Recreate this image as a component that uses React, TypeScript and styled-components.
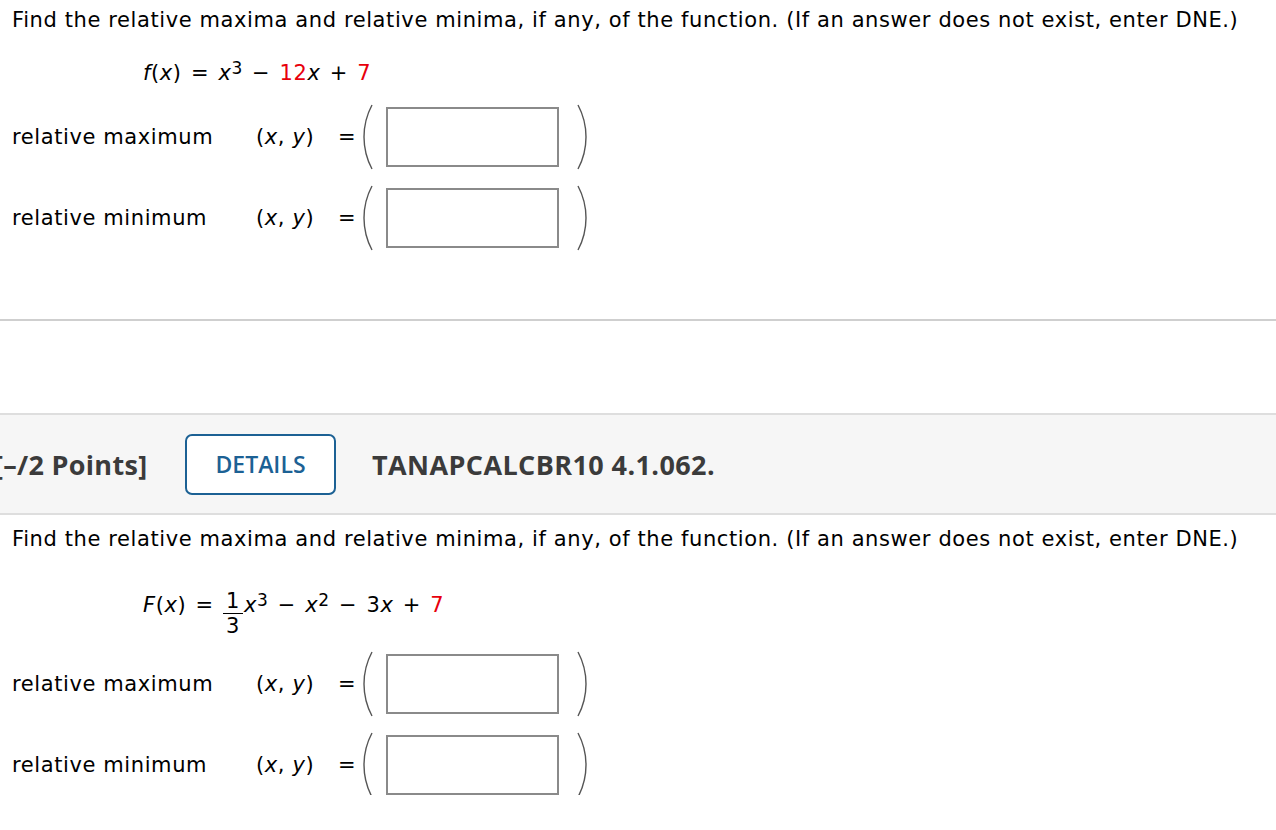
import React from "react";
import styled, { createGlobalStyle } from "styled-components";

const Global = createGlobalStyle`
  html, body { margin: 0; padding: 0; background: #fff; }
  body { font-family: "DejaVu Sans", Verdana, sans-serif; color: #000; }
`;

const Page = styled.div`
  width: 1276px;
  overflow: hidden;
`;

const Question = styled.section<{ $top: number }>`
  padding: ${(p) => p.$top}px 0 0 12px;
`;

const Prompt = styled.p`
  margin: 0;
  font-size: 21px;
  letter-spacing: 0.6px;
  line-height: 24px;
  white-space: nowrap;
`;

const Equation = styled.div<{ $mt: number }>`
  margin: ${(p) => p.$mt}px 0 0 131px;
  font-size: 21px;
  letter-spacing: 0.6px;
  word-spacing: 2px;
  line-height: 24px;
  white-space: pre;
`;

const I = styled.i`
  font-style: italic;
`;

const Red = styled.span`
  color: #e8000b;
`;

const Sup = styled.sup`
  font-size: 17px;
  position: relative;
  top: -6px;
  vertical-align: baseline;
  line-height: 0;
`;

const Frac = styled.span`
  display: inline-flex;
  flex-direction: column;
  align-items: center;
  vertical-align: 4px;
  font-size: 21px;
  line-height: 24px;
  margin: 0 1px 0 0;
`;

const FracTop = styled.span`
  border-bottom: 1.5px solid #000;
  padding: 0 3px;
`;

const Rows = styled.div<{ $mt: number }>`
  display: flex;
  flex-direction: column;
  gap: 21px;
  margin-top: ${(p) => p.$mt}px;
`;

const Row = styled.div`
  display: flex;
  align-items: center;
  height: 60px;
  font-size: 21px;
  letter-spacing: 0.6px;
`;

const Label = styled.span`
  width: 244px;
  white-space: nowrap;
`;

const Pair = styled.span`
  width: 82px;
  white-space: pre;
`;

const Eq = styled.span`
  width: 25px;
`;

const Box = styled.div`
  width: 169px;
  height: 56px;
  border: 2px solid #8a8a8a;
  margin: 0 17px 0 12px;
  background: #fff;
`;

const Paren = ({ right }: { right?: boolean }) => (
  <svg width="11" height="66" viewBox="0 0 11 66" style={{ flex: "none" }}>
    <path
      d={right ? "M2 1 Q10 16 10 33 Q10 50 2 65" : "M9 1 Q1 16 1 33 Q1 50 9 65"}
      fill="none"
      stroke="#555"
      strokeWidth="1.4"
    />
  </svg>
);

const Divider = styled.hr`
  margin: 71px 0 0 0;
  border: 0;
  border-top: 2px solid #cfcfcf;
  height: 0;
`;

const Header = styled.header`
  margin-top: 92px;
  height: 98px;
  background: #f6f6f6;
  border-top: 2px solid #dedede;
  border-bottom: 2px solid #dedede;
  display: flex;
  align-items: center;
  font-family: "Open Sans", sans-serif;
`;

const Points = styled.span`
  margin-left: -6px;
  font-weight: 700;
  font-size: 27px;
  letter-spacing: 0.3px;
  color: #3b3b3b;
  width: 191px;
  flex: none;
  white-space: nowrap;
`;

const DetailsButton = styled.button`
  width: 151px;
  height: 61px;
  flex: none;
  border: 2.5px solid #1c6194;
  border-radius: 7px;
  background: #fff;
  color: #1c6194;
  font-family: "Open Sans", sans-serif;
  font-weight: 600;
  font-size: 23px;
  padding: 0;
  margin-right: 36px;
`;

const Code = styled.span`
  font-weight: 700;
  font-size: 27px;
  letter-spacing: 0.4px;
  color: #3b3b3b;
  white-space: nowrap;
`;

const AnswerRows = ({ mt }: { mt: number }) => (
  <Rows $mt={mt}>
    {["relative maximum", "relative minimum"].map((l) => (
      <Row key={l}>
        <Label>{l}</Label>
        <Pair>
          (<I>x</I>, <I>y</I>)
        </Pair>
        <Eq>=</Eq>
        <Paren />
        <Box />
        <Paren right />
      </Row>
    ))}
  </Rows>
);

const PROMPT =
  "Find the relative maxima and relative minima, if any, of the function. (If an answer does not exist, enter DNE.)";

export default function App() {
  return (
    <Page>
      <Global />
      <Question $top={8}>
        <Prompt>{PROMPT}</Prompt>
        <Equation $mt={29}>
          <I>f</I>(<I>x</I>) = <I>x</I>
          <Sup>3</Sup> − <Red>12</Red>
          <I>x</I> + <Red>7</Red>
        </Equation>
        <AnswerRows mt={22} />
      </Question>
      <Divider />
      <Header>
        <Points>[–/2 Points]</Points>
        <DetailsButton>DETAILS</DetailsButton>
        <Code>TANAPCALCBR10 4.1.062.</Code>
      </Header>
      <Question $top={12}>
        <Prompt>{PROMPT}</Prompt>
        <Equation $mt={38}>
          <I>F</I>(<I>x</I>) ={" "}
          <Frac>
            <FracTop>1</FracTop>
            <span>3</span>
          </Frac>
          <I>x</I>
          <Sup>3</Sup> − <I>x</I>
          <Sup>2</Sup> − 3<I>x</I> + <Red>7</Red>
        </Equation>
        <AnswerRows mt={16} />
      </Question>
    </Page>
  );
}
